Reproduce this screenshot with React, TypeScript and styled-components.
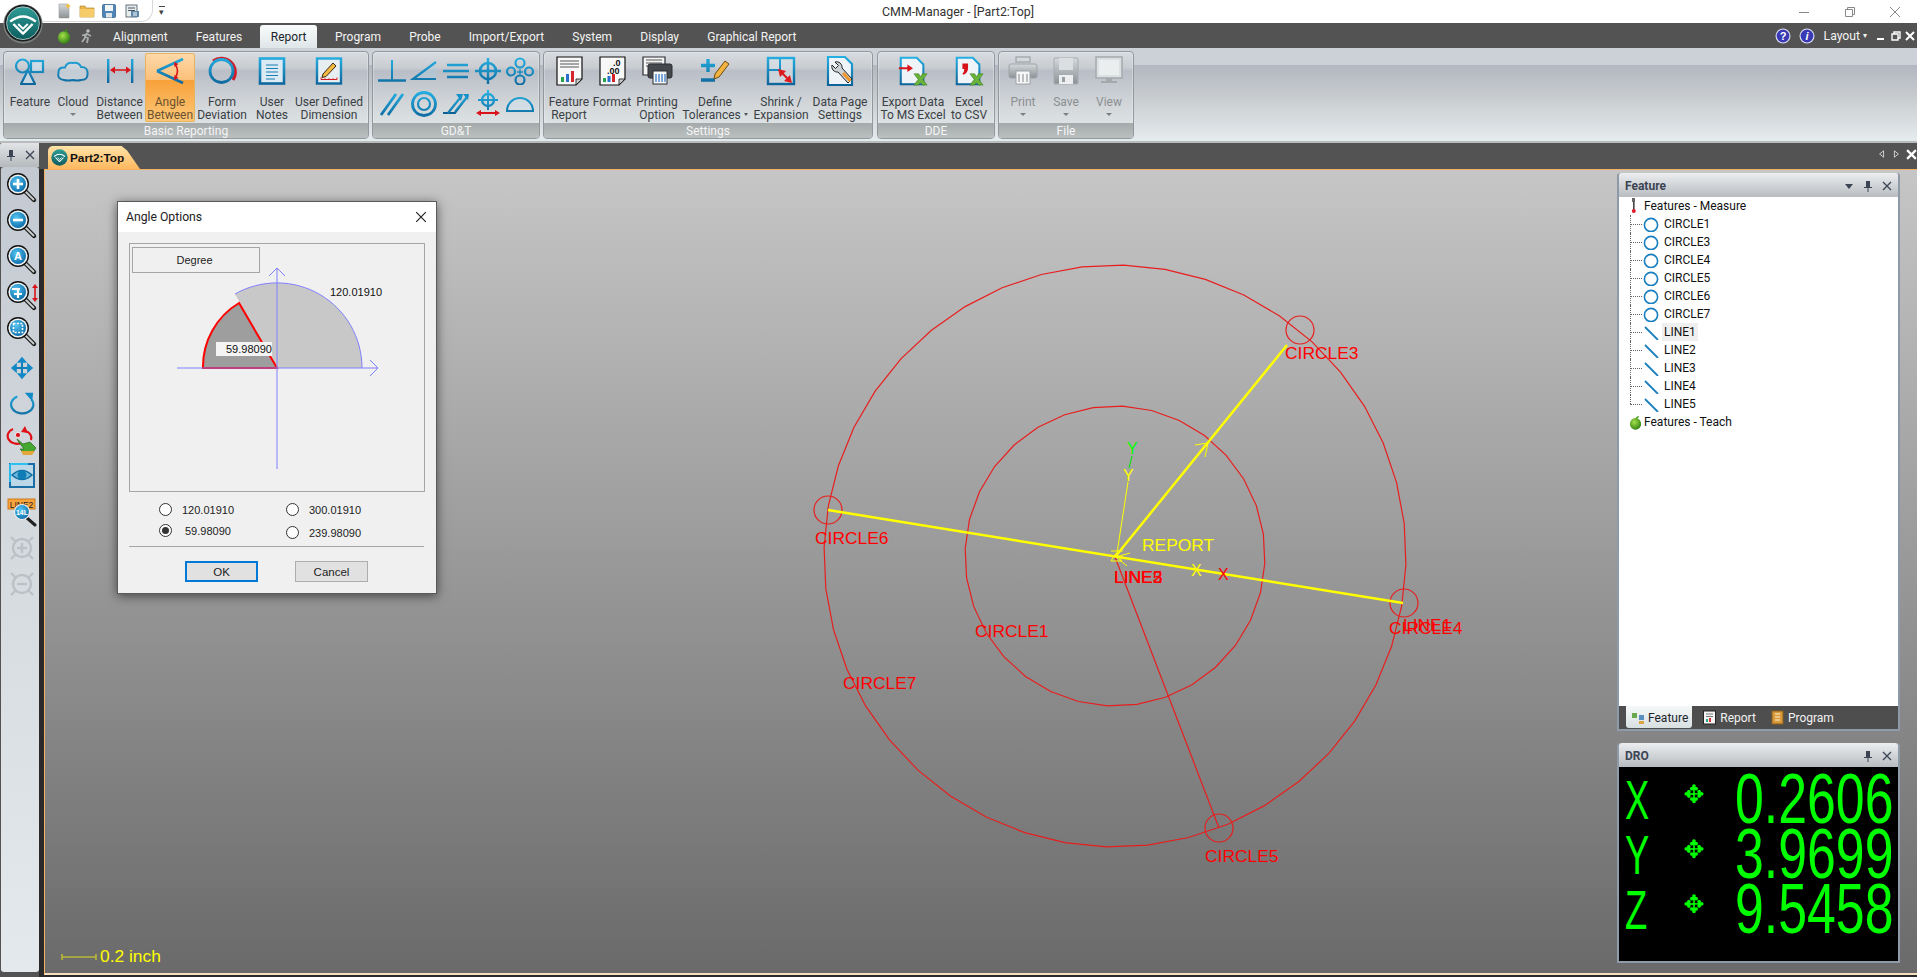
import React from "react";
import styled, { createGlobalStyle } from "styled-components";

const UI = `Roboto, "Liberation Sans", Arial, sans-serif`;
const TAHOMA = `"Liberation Sans", Arial, sans-serif`;

const Global = createGlobalStyle`
  html, body { margin: 0; height: 100%; overflow: hidden; background: #535353; }
  #root { height: 100%; }
`;

const Win = styled.div`
  width: 1917px; height: 977px; display: flex; flex-direction: column; position: relative;
  font: 12px ${UI}; color: #222; background: #535353; overflow: hidden;
`;
const TitleBar = styled.div`
  height: 23px; background: #fff; display: flex; align-items: center; flex: none;
`;
const QuickAccess = styled.div`
  margin-left: 43px; width: 110px; height: 22px; box-sizing: border-box; align-self: flex-start;
  border: 1px solid #d8d8d8; border-top: none; border-left: none; border-radius: 0 0 12px 0;
  display: flex; align-items: center; gap: 6.5px; padding-left: 13px; flex: none;
`;
const QuickMore = styled.span`
  margin-left: 6px; width: 6px; color: #444; font-size: 9px; line-height: 9px; border-top: 1px solid #444; padding-top: 1px; flex: none;
`;
const AppTitle = styled.div`
  margin-left: 717px; font: 12.4px ${UI}; color: #333; white-space: nowrap;
`;
const WinControls = styled.div`
  margin-left: auto; display: flex; align-items: center; gap: 33.5px; padding-right: 16px;
`;
const LogoSlot = styled.div`
  position: absolute; left: 3px; top: 4px; width: 40px; height: 40px; z-index: 5;
`;

const TabBar = styled.div`
  height: 25px; flex: none; background: #535353; display: flex; align-items: flex-end; padding-left: 56px;
`;
const TabIconSlot = styled.div<{ $gap: number }>`
  width: 16px; height: 18px; margin: 0 ${(p) => p.$gap}px 3px 0; display: flex; align-items: center; justify-content: center; flex: none;
`;
const Tab = styled.div<{ $active?: boolean }>`
  height: 23px; line-height: 24px; white-space: nowrap; font-size: 12px;
  padding: 0 ${(p) => (p.$active ? 11 : 14.1)}px;
  margin: 0 ${(p) => (p.$active ? 3.5 : 0)}px;
  color: ${(p) => (p.$active ? "#20252c" : "#f4f4f4")};
  border-radius: 3px 3px 0 0;
  background: ${(p) => (p.$active ? "linear-gradient(#fafcfc,#dfe6e8)" : "transparent")};
`;
const TabRight = styled.div`
  margin-left: auto; align-self: center; display: flex; align-items: center; color: #f2f2f2; font-size: 12.2px;
`;
const HelpSlot = styled.div`margin-right: 8px; display: flex;`;
const LayoutLabel = styled.span`margin-left: 1px; margin-right: 3px;`;
const Caret = styled.span`font-size: 8px; margin-right: 8px;`;

const Ribbon = styled.div`
  height: 95px; flex: none; box-sizing: border-box; padding: 3px 0 0 3px; display: flex;
  border-bottom: 2px solid #b9bbbc;
  background: linear-gradient(#ccd1d7 0, #ccd1d7 18%, #b2b7c1 18%, #c6cacd 50%, #e5ecee 100%);
`;
const Panel = styled.div<{ $w: number; $gap: number }>`
  width: ${(p) => p.$w}px; height: 88px; box-sizing: border-box; border: 1px solid #93989e; border-radius: 4px;
  display: flex; flex-direction: column; overflow: hidden; flex: none; margin-right: ${(p) => p.$gap}px;
  box-shadow: inset 0 0 0 1px rgba(255,255,255,.25);
  background: linear-gradient(#d8dbdf 0, #c9cdd2 18%, #b9bec7 22%, #d2d6d9 60%, #e4eaec 100%);
`;
const PanelBody = styled.div<{ $pad: number }>`
  height: 71px; flex: none; display: flex; padding-left: ${(p) => p.$pad}px;
`;
const PanelCaption = styled.div`
  height: 16px; line-height: 17px; flex: none; text-align: center; color: #f5f5f5; font-size: 12px;
  background: linear-gradient(#a4a9aa, #bcc1c2);
`;
const RibbonBtn = styled.div<{ $w: number; $active?: boolean; $off?: boolean }>`
  width: ${(p) => p.$w}px; flex: none; height: 69px; margin-top: 1px; display: flex; flex-direction: column; align-items: center;
  box-sizing: border-box;
  color: ${(p) => (p.$off ? "#8b8f92" : p.$active ? "#6b5130" : "#3a3f45")};
  outline: ${(p) => (p.$active ? "1px solid #e6b45f" : "none")};
  outline-offset: -1px;
  border-radius: 2px;
  background: ${(p) => (p.$active ? "linear-gradient(#fdd9aa 0,#fbc07a 39%,#f8a13a 39%,#fdc878 100%)" : "transparent")};
`;
const BtnIcon = styled.div`
  height: 36px; flex: none; display: flex; align-items: center; justify-content: center;
`;
const BtnLabel = styled.div`
  text-align: center; line-height: 13px; font-size: 12px; white-space: nowrap; padding-top: 7px;
`;
const TinyCaret = styled.div`
  width: 0; height: 0; border: 3px solid transparent; border-top: 3px solid #7c8084; margin: 4px auto 0;
`;
const InlineCaret = styled.span`
  display: inline-block; width: 0; height: 0; border: 2.5px solid transparent; border-top: 3px solid #555; margin-left: 3px; vertical-align: 1px;
`;
const GdtGrid = styled.div`
  display: grid; grid-template-columns: repeat(5, 32px); grid-template-rows: 33px 33px; padding: 2px 0 0 3px;
  justify-items: center; align-items: center;
`;

const Below = styled.div`flex: 1; display: flex; min-height: 0;`;
const LeftDock = styled.div`
  width: 39px; flex: none; display: flex; flex-direction: column; background: #535353;
`;
const LeftHead = styled.div`
  height: 24px; flex: none; display: flex; align-items: center; justify-content: center; gap: 8px;
  background: linear-gradient(#e2e4e6, #b6babd); border-radius: 2px 0 0 0;
`;
const LeftBody = styled.div`
  flex: 1; margin: 0 0 5px 1px; display: flex; flex-direction: column; align-items: center;
  border-radius: 3px; padding-top: 2.5px;
  background: linear-gradient(#c3c9d1 0, #d3d8dd 40%, #e3e9ec 100%);
`;
const ToolSlot = styled.div`
  width: 38px; height: 36px; box-sizing: border-box; padding-left: 4px; flex: none; display: flex; align-items: center; justify-content: center;
`;
const RightCol = styled.div`
  flex: 1; display: flex; flex-direction: column; min-width: 0; background: #2a2a2a;
`;
const DocStrip = styled.div`
  height: 26px; flex: none; display: flex; align-items: flex-end; background: #535353; padding-left: 9px;
`;
const DocTab = styled.div`
  width: 92px; height: 23px; box-sizing: border-box; display: flex; align-items: center; gap: 2px; padding-left: 3px;
  font: bold 11.8px ${TAHOMA}; color: #111; border-radius: 5px 0 0 0;
  background: linear-gradient(#ffe3a8, #ffb85e);
  clip-path: polygon(0 0, 80% 0, 86% 20%, 100% 100%, 0 100%);
`;
const DocNav = styled.div`
  margin-left: auto; align-self: center; display: flex; align-items: center; gap: 6px; margin-top: -4px;
`;
const Workspace = styled.div`
  flex: 1; margin: 0 0 2px 5px; display: flex; position: relative; min-height: 0; box-sizing: border-box;
  border: 1px solid #f2b163; border-bottom: 2px solid #f7e0bf; border-right: none;
  background: linear-gradient(#c6c6c6, #6a6a6a);
`;
const Viewport = styled.svg`display: block; flex: none;`;
const DockColumn = styled.div`
  width: 283px; flex: none; padding-top: 3px; display: flex; flex-direction: column; gap: 12px;
`;
const DockPanel = styled.div<{ $h: number }>`
  width: 283px; height: ${(p) => p.$h}px; box-sizing: border-box; border: 2px solid #8f9aa8; border-top: none;
  border-radius: 3px 3px 0 0; display: flex; flex-direction: column;
`;
const DockHead = styled.div`
  height: 23px; padding: 1px 6px 0; flex: none; display: flex; align-items: center; border-radius: 3px 3px 0 0;
  background: linear-gradient(#eceef0, #b8bcc0); font: bold 12px ${UI}; color: #3c4454;
`;
const DockActions = styled.div`margin-left: auto; display: flex; align-items: center; gap: 8px;`;
const TreeBody = styled.div`
  flex: 1; background: #fff; font: 12px ${UI}; color: #111; min-height: 0;
`;
const RootRow = styled.div`
  height: 18px; display: flex; align-items: center; padding-left: 7px;
`;
const RootIcon = styled.div`width: 18px; height: 18px; display: flex; align-items: center; justify-content: center;`;
const TreeGroup = styled.div`padding-left: 11px;`;
const TreeRow = styled.div<{ $last?: boolean }>`
  height: 18px; display: flex; align-items: center; position: relative; padding-left: 13px;
  &::before { content: ""; position: absolute; left: 0; top: 0; height: ${(p) => (p.$last ? "50%" : "100%")}; border-left: 1px dotted #666; }
  &::after { content: ""; position: absolute; left: 0; top: 50%; width: 12px; border-top: 1px dotted #666; }
`;
const TreeIcon = styled.div`width: 16px; height: 18px; margin-right: 5px; display: flex; align-items: center; justify-content: center;`;
const TreeText = styled.span<{ $hl?: boolean }>`
  padding: 2px; margin-left: -2px; background: ${(p) => (p.$hl ? "#efefef" : "transparent")};
`;
const DockTabs = styled.div`
  height: 23px; flex: none; background: #4e4e4e; display: flex; align-items: flex-start; padding-left: 7px; gap: 5px;
`;
const DockTab = styled.div<{ $active?: boolean }>`
  height: 21px; display: flex; align-items: center; gap: 3px; padding: 1px 4px 0 5px;
  font-size: 12px; color: ${(p) => (p.$active ? "#20252c" : "#f2f2f2")};
  background: ${(p) => (p.$active ? "linear-gradient(#f5f8f8,#d9e0e2)" : "transparent")};
  border-radius: 0 0 3px 3px;
`;
const DroBody = styled.div`
  flex: 1; background: #000; color: #00ff00; padding-top: 5px; display: flex; flex-direction: column;
`;
const DroRow = styled.div`
  height: 55px; flex: none; display: flex; align-items: center;
`;
const DroAxis = styled.span`
  width: 26px; margin-left: 6px; font: 56px/55px "Liberation Sans", Arial, sans-serif; flex: none; white-space: nowrap;
  display: inline-block; transform: scaleX(.65); transform-origin: 0 50%;
`;
const DroSign = styled.span`
  margin: 0 0 10px 30px; width: 26px; text-align: center; font: 25px/30px "DejaVu Sans", sans-serif; flex: none;
`;
const DroValue = styled.div`
  margin-left: auto; margin-right: 5px; width: 158px; flex: none; white-space: nowrap;
  font: 70px/55px "Liberation Sans", Arial, sans-serif; transform: scaleX(.74); transform-origin: 0 50%;
`;

const Dialog = styled.div`
  position: absolute; left: 72px; top: 31px; width: 320px; height: 393px; box-sizing: border-box; z-index: 3;
  background: #f0f0f0; border: 1px solid #5a5a5a; box-shadow: 0 2px 10px rgba(0,0,0,.55);
  display: flex; flex-direction: column; font: 11px ${TAHOMA}; color: #222;
`;
const DlgTitle = styled.div`
  height: 30px; flex: none; background: #fff; display: flex; align-items: center; padding: 0 9px 0 8px; font: 12.2px ${UI}; color: #222;
`;
const DlgClose = styled.div`margin-left: auto; display: flex;`;
const DlgBody = styled.div`padding: 11px 12px 0 11px; display: flex; flex-direction: column; flex: 1;`;
const DlgFrame = styled.div`
  width: 296px; height: 249px; box-sizing: border-box; border: 1px solid #a5a5a5; position: relative;
`;
const DegreeBtn = styled.div`
  position: absolute; left: 2px; top: 3px; width: 128px; height: 26px; box-sizing: border-box; padding-right: 3px;
  border: 1px solid #a5a5a5; background: #f0f0f0; display: flex; align-items: center; justify-content: center;
`;
const RadioGrid = styled.div`
  display: grid; grid-template-columns: 127px 127px; padding: 7px 0 0 30px;
`;
const RadioItem = styled.div<{ $nudge?: number; $top?: number }>`
  height: 21px; display: flex; align-items: center; gap: ${(p) => 10 + (p.$nudge ?? 0)}px;
  margin-top: ${(p) => p.$top ?? 0}px;
`;
const RadioDot = styled.span<{ $on?: boolean }>`
  width: 13px; height: 13px; box-sizing: border-box; border-radius: 50%; border: 1px solid #333; background: #fff; flex: none;
  display: flex; align-items: center; justify-content: center;
  &::after { content: ""; width: 7px; height: 7px; border-radius: 50%; background: ${(p) => (p.$on ? "#333" : "transparent")}; }
`;
const DlgRule = styled.div`height: 1px; background: #a5a5a5; width: 295px; margin-top: 3px;`;
const DlgButtons = styled.div`
  display: flex; gap: 37px; padding: 14px 0 0 56px;
`;
const DlgBtn = styled.div<{ $def?: boolean }>`
  width: 73px; height: 21px; box-sizing: border-box; display: flex; align-items: center; justify-content: center; font-size: 11.5px;
  background: #e1e1e1; border: ${(p) => (p.$def ? "2px solid #0078d7" : "1px solid #adadad")};
`;

/* ---------- icon helpers ---------- */
const Svg = ({ s = 32, vb, children }: { s?: number; vb?: string; children: React.ReactNode }) => (
  <svg width={s} height={s} viewBox={vb ?? "0 0 32 32"} fill="none">{children}</svg>
);
const BL = "url(#blueG)";
const Defs = () => (
  <svg width="0" height="0" style={{ display: "block" }}>
    <defs>
      <linearGradient id="blueG" gradientUnits="userSpaceOnUse" x1="0" y1="0" x2="0" y2="32">
        <stop offset="0" stopColor="#27b3e6" /><stop offset="1" stopColor="#0b5f94" />
      </linearGradient>
      <radialGradient id="lens" cx=".4" cy=".35" r=".7">
        <stop offset="0" stopColor="#56c6f2" /><stop offset="1" stopColor="#0a6aa8" />
      </radialGradient>
      <radialGradient id="apple" cx=".4" cy=".35" r=".7">
        <stop offset="0" stopColor="#a4e04a" /><stop offset="1" stopColor="#2c7d10" />
      </radialGradient>
      <linearGradient id="orb" x1="0" y1="0" x2="0" y2="1">
        <stop offset="0" stopColor="#2f9c96" /><stop offset="1" stopColor="#0d5d5e" />
      </linearGradient>
      <linearGradient id="grayG" x1="0" y1="0" x2="0" y2="1">
        <stop offset="0" stopColor="#d5d9dc" /><stop offset="1" stopColor="#8b9195" />
      </linearGradient>
    </defs>
  </svg>
);
const Chevrons = ({ c = "#fff" }: { c?: string }) => (
  <g stroke={c} strokeWidth="3" fill="none" strokeLinejoin="round">
    <path d="M9 22 Q25 9 41 22" />
    <path d="M13 25 L25 37 L37 25" />
    <path d="M19 25 L25 31 L31 25" strokeWidth="2.4" />
  </g>
);
const Logo = () => (
  <svg width="40" height="40" viewBox="0 0 50 50">
    <circle cx="25" cy="25" r="24.5" fill="#7b7f80" />
    <circle cx="25" cy="24" r="23" fill="#1a1f20" />
    <circle cx="25" cy="24" r="20.5" fill="url(#orb)" stroke="#c8d4d4" strokeWidth="1" />
    <Chevrons />
  </svg>
);
const MiniLogo = () => (
  <svg width="17" height="17" viewBox="0 0 50 50">
    <circle cx="25" cy="25" r="24" fill="url(#orb)" />
    <Chevrons />
  </svg>
);
const AppleIcon = ({ s = 16 }: { s?: number }) => (
  <svg width={s} height={s} viewBox="0 0 16 16">
    <ellipse cx="8" cy="9.5" rx="6" ry="6.2" fill="url(#apple)" />
    <path d="M8 4 Q9 1 12 1.5 Q11 4 8 4Z" fill="#3c9b12" />
  </svg>
);
const Runner = () => (
  <Svg s={16} vb="0 0 16 16">
    <circle cx="9" cy="3" r="1.8" fill="#b8bcbc" />
    <path d="M8 5 L6 9 L9 10 L8 15 M8 6 L12 8 M6.5 6.5 L3 7.5 M6 10 L3 14" stroke="#a9adad" strokeWidth="1.8" />
  </Svg>
);
const QNew = () => (
  <Svg s={16} vb="0 0 16 16">
    <path d="M3 1h8l2 2v12H3z" fill="url(#grayG)" stroke="#9a9a9a" strokeWidth=".6" />
    <path d="M12 0l1 2 2 1-2 1-1 2-1-2-2-1 2-1z" fill="#f2c040" />
  </Svg>
);
const QOpen = () => (
  <Svg s={16} vb="0 0 16 16">
    <path d="M1 3h5l1 2h8v9H1z" fill="#e9b64c" stroke="#b98a2a" strokeWidth=".7" />
    <path d="M1 6h14v8H1z" fill="#f6cc6a" />
  </Svg>
);
const QSave = () => (
  <Svg s={16} vb="0 0 16 16">
    <rect x="1.5" y="1.5" width="13" height="13" rx="1" fill="#4f86b8" stroke="#2c5a87" strokeWidth=".7" />
    <rect x="4" y="2" width="8" height="6" fill="#f1f4f7" />
    <rect x="5" y="10" width="6" height="4.5" fill="#dfe4e8" />
  </Svg>
);
const QReport = () => (
  <Svg s={16} vb="0 0 16 16">
    <rect x="2" y="2" width="11" height="12" fill="#e7ecef" stroke="#48545f" strokeWidth=".8" />
    <path d="M4 5h7M4 7.5h7" stroke="#48545f" />
    <rect x="7" y="8" width="8" height="6" fill="#5f87a8" />
    <path d="M9 10h4M9 12h4" stroke="#fff" />
  </Svg>
);

const Feature = () => (
  <Svg s={32}>
    <circle cx="8.5" cy="11" r="6.5" stroke={BL} strokeWidth="2.2" />
    <rect x="17" y="6" width="12" height="11" fill="#cfe6f2" fillOpacity=".55" stroke={BL} strokeWidth="2.2" />
    <path d="M14 15 L21 29 H7 Z" fill="#cfe6f2" fillOpacity=".55" stroke={BL} strokeWidth="2.2" strokeLinejoin="round" />
  </Svg>
);
const Cloud = () => (
  <Svg s={32}>
    <path d="M7 25 Q0 24 1.5 18 Q1 12 8 12.5 Q10 7 16 8 Q22 7 24 12 Q31 12 30.5 18.5 Q31 25 24 25 Q20 26 16 25 Q11 26 7 25 Z" fill="#d5e4ee" fillOpacity=".35" stroke={BL} strokeWidth="2" />
  </Svg>
);
const Distance = () => (
  <Svg s={32}>
    <rect x="3" y="4" width="2.4" height="24" fill={BL} />
    <rect x="27" y="4" width="2.4" height="24" fill={BL} />
    <path d="M7 15H26" stroke="#d8141a" strokeWidth="1.6" />
    <path d="M6 15l5-3.4v6.8zM27 15l-5-3.4v6.8z" fill="#d8141a" />
  </Svg>
);
const AngleI = () => (
  <Svg s={32}>
    <path d="M3 16 L29 4 M3 16 L29 28" stroke={BL} strokeWidth="2.8" />
    <path d="M21 9 Q26 16 21 23" stroke="#d8141a" strokeWidth="1.6" />
    <path d="M20 7l4.5 2-4 3zM20 25l4.5-2-4-3z" fill="#d8141a" />
  </Svg>
);
const Form = () => (
  <Svg s={32}>
    <path d="M7 6 A14 14 0 0 1 27 25" stroke="#d31a28" strokeWidth="3" />
    <circle cx="15.5" cy="16" r="11.5" stroke={BL} strokeWidth="2.8" />
  </Svg>
);
const Notes = () => (
  <Svg s={32}>
    <rect x="4" y="3.5" width="24" height="25" fill="#dbeaf3" stroke={BL} strokeWidth="2.6" />
    <path d="M10 10h12M10 13.5h12M10 17h12M10 20.5h12M10 24h9" stroke="#1a7fb7" strokeWidth="1.1" />
  </Svg>
);
const UserDim = () => (
  <Svg s={32}>
    <rect x="4" y="3.5" width="24" height="25" fill="#e6eef2" stroke={BL} strokeWidth="2.4" />
    <path d="M10 19 L20 8 L23 11 L13 21.5 L9 22.5 Z" fill="#f4b942" stroke="#3a2a10" strokeWidth="1" />
    <path d="M8 24.5h16M8 22.5v2M12 23.3v1.2M16 23.3v1.2M20 23.3v1.2M24 22.5v2" stroke="#d41a20" strokeWidth="1" />
  </Svg>
);
const Perp = () => (
  <Svg s={28} vb="0 0 28 28"><path d="M14 3V23" stroke={BL} strokeWidth="2" /><path d="M0 23.5H28" stroke={BL} strokeWidth="2.4" /></Svg>
);
const AngGdt = () => (
  <Svg s={28} vb="0 0 28 28"><path d="M26 5 L3 22 H26" stroke={BL} strokeWidth="2.2" fill="#9dd3ea" fillOpacity=".25" /></Svg>
);
const Flat = () => (
  <Svg s={28} vb="0 0 28 28"><path d="M5 8H26M1 14H27M5 20H26" stroke={BL} strokeWidth="2.4" /></Svg>
);
const Target = () => (
  <Svg s={28} vb="0 0 28 28"><circle cx="14" cy="14" r="8" stroke={BL} strokeWidth="2.6" /><path d="M14 1V27M1 14H27" stroke={BL} strokeWidth="2.4" /></Svg>
);
const Pattern = () => (
  <Svg s={28} vb="0 0 28 28">
    <circle cx="14" cy="6" r="4.5" stroke={BL} strokeWidth="2.2" /><circle cx="14" cy="23" r="4.5" stroke={BL} strokeWidth="2.2" />
    <circle cx="5" cy="14.5" r="4" stroke={BL} strokeWidth="2.2" /><circle cx="23" cy="14.5" r="4" stroke={BL} strokeWidth="2.2" />
    <path d="M14 12V18M11 15H17" stroke={BL} strokeWidth="1.4" />
  </Svg>
);
const Para = () => (
  <Svg s={28} vb="0 0 28 28"><path d="M3 25 L18 4 M10 25 L25 4" stroke={BL} strokeWidth="2.8" /></Svg>
);
const Conc = () => (
  <Svg s={28} vb="0 0 28 28"><circle cx="14" cy="14" r="11.5" stroke={BL} strokeWidth="2.8" /><circle cx="14" cy="14" r="6" stroke={BL} strokeWidth="2.2" /></Svg>
);
const Runout = () => (
  <Svg s={28} vb="0 0 28 28">
    <path d="M1 23H13L25 7" stroke="#0b5f94" strokeWidth="1.8" />
    <path d="M6 23 L18 8 M13 22 L25 7" stroke={BL} strokeWidth="2.2" />
    <path d="M14 4l7 0-2 7zM21 4l6 0-1 6z" fill="#1690c8" />
  </Svg>
);
const TargetW = () => (
  <Svg s={28} vb="0 0 28 28">
    <circle cx="14" cy="10" r="6" stroke={BL} strokeWidth="2.4" /><path d="M14 0V20M4 10H24" stroke={BL} strokeWidth="2" />
    <path d="M4 23H24" stroke="#d8141a" strokeWidth="2" /><path d="M2 23l5-3v6zM26 23l-5-3v6z" fill="#d8141a" />
  </Svg>
);
const Semi = () => (
  <Svg s={28} vb="0 0 28 28"><path d="M1 21 A13 13 0 0 1 27 21 Z" stroke={BL} strokeWidth="2.2" fill="#cfe7f2" fillOpacity=".4" /></Svg>
);
const Doc = ({ b = "#111", children }: { b?: string; children?: React.ReactNode }) => (
  <>
    <path d="M4 2H29V24L23 30H4Z" fill="#f8f8f8" stroke={b} strokeWidth="1.2" />
    <path d="M29 24H23V30Z" fill="#c9c9c9" stroke={b} strokeWidth=".8" />
    {children}
  </>
);
const Bars = () => (
  <g>
    <rect x="8" y="22" width="3" height="5" fill="#24a34a" /><rect x="13" y="19" width="3" height="8" fill="#2a6fd0" /><rect x="18" y="16" width="3" height="11" fill="#d6242a" />
  </g>
);
const FeatRep = () => (
  <Svg s={32}><Doc><path d="M7 6H26M7 9H26M7 12H26" stroke="#555" /><Bars /></Doc></Svg>
);
const Format = () => (
  <Svg s={32}>
    <Doc>
      <text x="17" y="11" fontFamily={TAHOMA} fontWeight="700" fontSize="9" fill="#111">.0</text>
      <text x="11" y="19" fontFamily={TAHOMA} fontWeight="700" fontSize="9" fill="#111">.00</text>
      <rect x="7" y="23" width="3" height="4" fill="#24a34a" /><rect x="11.5" y="21" width="3" height="6" fill="#2a6fd0" /><rect x="16" y="19" width="3" height="8" fill="#d6242a" />
    </Doc>
  </Svg>
);
const Printer = ({ gray }: { gray?: boolean }) => {
  const d = gray ? "#9ca3a8" : "#2a2d30";
  return (
    <Svg s={32}>
      {gray ? (
        <rect x="9" y="2" width="14" height="5" fill="#d5d9dc" stroke={d} strokeWidth="1.2" />
      ) : (
        <>
          <path d="M2 2H24V20H2Z" fill="#f4f4f4" stroke={d} strokeWidth="1.2" />
          <path d="M5 5H21M5 8H21M5 11H14" stroke="#555" />
        </>
      )}
      <rect x={gray ? 2 : 7} y="9" width={gray ? 28 : 24} height="14" rx="2" fill={gray ? "url(#grayG)" : "#45494d"} stroke={d} />
      <rect x={gray ? 9 : 12} y="16" width={14} height="13" fill="#f7f7f7" stroke={d} />
      <path d={gray ? "M12 19V27M16 19V27M20 19V27" : "M15 19V27M18 19V27M21 19V27M24 19V27"} stroke={gray ? "#9aa0a4" : "#3a7ec8"} strokeWidth="1.3" />
    </Svg>
  );
};
const DefineTol = () => (
  <Svg s={32}>
    <path d="M9 4V17M2 10.5H16" stroke={BL} strokeWidth="3.4" />
    <path d="M2 25H16" stroke={BL} strokeWidth="3.4" />
    <path d="M16 19 L26 6 L30 9 L20 22 L15 24Z" fill="#f2b23e" stroke="#6e4a12" strokeWidth="1" />
  </Svg>
);
const Shrink = () => (
  <Svg s={32}>
    <rect x="3" y="3" width="26" height="26" fill="#dbe8ee" fillOpacity=".5" stroke={BL} strokeWidth="2.4" />
    <path d="M3 15H15V3" stroke={BL} strokeWidth="2" />
    <path d="M16 17 L24 25" stroke="#dd1c20" strokeWidth="2.2" /><path d="M27 28l-2-8-6 6zM13 14l8 2-6 6z" fill="#dd1c20" />
  </Svg>
);
const BlueDoc = () => (
  <path d="M4 2H21L28 9V30H4Z" fill="#eef4f8" stroke={BL} strokeWidth="2.2" />
);
const DataPage = () => (
  <Svg s={32}>
    <BlueDoc />
    <path d="M8 10 a5.5 5.5 0 0 0 6 7 L24 28 L28 24 L18 13 a5.5 5.5 0 0 0 -7-6 l3.5 3.5 -3 3z" fill="#cfd3d6" stroke="#222" strokeWidth="1" />
    <path d="M19 18 L26.5 26" stroke="#f0962a" strokeWidth="3" />
  </Svg>
);
const XlMark = () => (
  <path d="M18 19h5l2 3 2-3h5l-4.5 6 4.5 6h-5l-2-3-2 3h-5l4.5-6z" fill="#69b33a" stroke="#3e7d1c" strokeWidth=".6" />
);
const Export = () => (
  <Svg s={32} vb="0 0 34 32">
    <BlueDoc />
    <path d="M2 13H13" stroke="#d8141a" strokeWidth="2.2" /><path d="M17 13l-6-4v8z" fill="#d8141a" />
    <XlMark />
  </Svg>
);
const ToCsv = () => (
  <Svg s={32} vb="0 0 34 32">
    <BlueDoc />
    <path d="M10 8h6v5q0 5-5 7l-1-1q2-2 2-5h-2z" fill="#d8141a" />
    <XlMark />
  </Svg>
);
const SaveG = () => (
  <Svg s={32}>
    <rect x="4" y="3" width="24" height="26" rx="1" fill="url(#grayG)" stroke="#a7acaf" />
    <rect x="9" y="3" width="14" height="12" fill="#dcdfe1" /><rect x="9" y="20" width="14" height="9" fill="#eceef0" /><rect x="12" y="22" width="3" height="5" fill="#9a9fa2" />
  </Svg>
);
const ViewG = () => (
  <Svg s={32}>
    <rect x="3" y="2" width="26" height="21" fill="#dde0e2" stroke="#a7acaf" strokeWidth="1.6" />
    <rect x="6" y="5" width="20" height="15" fill="#ebeeef" />
    <path d="M13 23h6v3h5v2H8v-2h5z" fill="#a4a9ac" />
  </Svg>
);

const Mag = ({ children, extra }: { children?: React.ReactNode; extra?: React.ReactNode }) => (
  <Svg s={32}>
    <path d="M19 19 L28 28" stroke="#1a1a1a" strokeWidth="4.4" strokeLinecap="round" />
    <path d="M20 20 L27.5 27.5" stroke="#c9cdd0" strokeWidth="2" strokeLinecap="round" />
    <circle cx="12" cy="12" r="11" fill="#111" />
    <circle cx="12" cy="12" r="9.6" fill="#f2f5f6" />
    <circle cx="12" cy="12" r="8" fill="url(#lens)" />
    {children}
    {extra}
  </Svg>
);
const Glow = ({ d, w = 2.6 }: { d: string; w?: number }) => <path d={d} stroke="#fff" strokeWidth={w} />;
const Tools = [
  <Mag key="a"><Glow d="M7 12H17M12 7V17" /></Mag>,
  <Mag key="b"><Glow d="M7 12H17" /></Mag>,
  <Mag key="c"><text x="12" y="16" textAnchor="middle" fontFamily={TAHOMA} fontWeight="700" fontSize="11" fill="#fff">A</text></Mag>,
  <Mag key="d" extra={<><path d="M29 7V19" stroke="#d8141a" strokeWidth="1.6" /><path d="M29 4l-3 4h6zM29 22l-3-4h6z" fill="#d8141a" /></>}>
    <Glow d="M6 9H14M8 14H16M12 10V18" w={2.2} />
  </Mag>,
  <Mag key="e"><rect x="7.5" y="7.5" width="9" height="9" stroke="#fff" strokeWidth="1.6" strokeDasharray="2 1.4" /></Mag>,
  <Svg key="f" s={24} vb="0 0 28 28">
    <path d="M14 5V23M5 14H23" stroke="#1080bc" strokeWidth="2.4" />
    <path d="M14 1l6 7H8zM14 27l6-7H8zM1 14l7-6v12zM27 14l-7-6v12z" fill="#1389c6" />
  </Svg>,
  <Svg key="g" s={26} vb="0 0 28 28">
    <path d="M9 6 A12 9.5 0 1 0 24 9" stroke={BL} strokeWidth="2.4" />
    <path d="M17 2l9 0-1 9z" fill="#1389c6" />
  </Svg>,
  <Svg key="h" s={32}>
    <path d="M7 5 A9 7.5 0 1 0 15 19" stroke="#e01218" strokeWidth="2.2" fill="none" />
    <path d="M19 7 A8 7 0 0 1 25 16" stroke="#e01218" strokeWidth="2.2" />
    <path d="M19 2l3 7-7-1z" fill="#e01218" />
    <circle cx="12" cy="11" r="2.6" fill="#d8141a" stroke="#fff" strokeWidth=".8" />
    <path d="M11 15l6 5 7-2 6 6-3 4H17l-3-3 4 0-6-8z" fill="#45a82e" stroke="#27641a" strokeWidth=".7" />
    <path d="M15 27h14l-3 4H17z" fill="#e2a63a" />
  </Svg>,
  <Svg key="i" s={28} vb="0 0 28 28">
    <rect x="2" y="2" width="24" height="23" fill="#bcd8e8" stroke="#1a6ea5" strokeWidth="2" />
    <path d="M2 2H20M2 2V20" stroke="#2bc0f0" strokeWidth="1.8" />
    <path d="M4 13 Q14 4 24 13 Q14 22 4 13Z" fill="#6db8da" stroke="#0e6fa5" strokeWidth="1.6" />
    <circle cx="14" cy="13" r="4.5" fill="#0f7cb5" />
  </Svg>,
  <Svg key="j" s={30} vb="0 0 30 30">
    <rect x="1" y="2" width="27" height="10" fill="#f8a33c" stroke="#c97a1a" />
    <text x="14.5" y="10.5" textAnchor="middle" fontFamily={TAHOMA} fontSize="8.5" fill="#222">LINE2</text>
    <path d="M20 21 L28 28" stroke="#222" strokeWidth="3" strokeLinecap="round" />
    <circle cx="15" cy="15" r="7.5" fill="url(#lens)" stroke="#eee" strokeWidth="1.2" />
    <text x="15" y="18" textAnchor="middle" fontFamily={TAHOMA} fontSize="7" fontWeight="700" fill="#fff">14L</text>
  </Svg>,
  <Svg key="k" s={26} vb="0 0 26 26">
    <circle cx="13" cy="13" r="9" stroke="#bcc1c6" strokeWidth="2.4" />
    <path d="M2 2l5 5M24 2l-5 5M2 24l5-5M24 24l-5-5" stroke="#bcc1c6" strokeWidth="2.4" />
    <path d="M8 13H18M13 8V18" stroke="#bcc1c6" strokeWidth="2.4" />
  </Svg>,
  <Svg key="l" s={26} vb="0 0 26 26">
    <circle cx="13" cy="13" r="9" stroke="#bcc1c6" strokeWidth="2.4" />
    <path d="M2 2l5 5M24 2l-5 5M2 24l5-5M24 24l-5-5" stroke="#bcc1c6" strokeWidth="2.4" />
    <path d="M8 13H18" stroke="#bcc1c6" strokeWidth="2.4" />
  </Svg>,
];

const Pin = ({ c = "#3c4454" }: { c?: string }) => (
  <Svg s={12} vb="0 0 12 12"><path d="M4 1H8V7H10V8H6.5V12H5.5V8H2V7H4Z" fill={c} /></Svg>
);
const XMark = ({ c = "#3c4454", s = 10, w = 1.3 }: { c?: string; s?: number; w?: number }) => (
  <Svg s={s} vb="0 0 10 10"><path d="M1 1L9 9M9 1L1 9" stroke={c} strokeWidth={w} /></Svg>
);
const Ring = () => (
  <Svg s={16} vb="0 0 16 16"><circle cx="8" cy="9" r="6.6" stroke="#1a7fbf" strokeWidth="1.6" /></Svg>
);
const LineI = () => (
  <Svg s={16} vb="0 0 16 16"><path d="M2 3L15 16" stroke="#1a7fbf" strokeWidth="1.8" /></Svg>
);
const Probe = () => (
  <Svg s={16} vb="0 0 16 16">
    <rect x="5" y="0" width="3" height="4" fill="#666" /><rect x="6" y="4" width="1.6" height="8" fill="#444" /><circle cx="6.8" cy="13" r="2" fill="#e01a2a" />
  </Svg>
);
const Help = ({ t }: { t: string }) => (
  <svg width="16" height="16" viewBox="0 0 16 16">
    <circle cx="8" cy="8" r="7.5" fill="#dfe3f6" />
    <circle cx="8" cy="8" r="6.4" fill="#3a3ab4" />
    <text x="8" y="12" textAnchor="middle" fontFamily={TAHOMA} fontWeight="700" fontStyle={t === "i" ? "italic" : "normal"} fontSize="11" fill="#fff">{t}</text>
  </svg>
);

const faceted = (cx: number, cy: number, r: number, n: number, rot = 0) =>
  Array.from({ length: n }, (_, i) => {
    const a = rot + (i * 2 * Math.PI) / n;
    return `${(cx + r * Math.cos(a)).toFixed(1)},${(cy + r * Math.sin(a)).toFixed(1)}`;
  }).join(" ");

const RED = "#ff0000";
const LN = "#e81e1e";
const YEL = "#ffff00";
const CanvasText = ({ x, y, c = RED, fs = 17.4, children }: { x: number; y: number; c?: string; fs?: number; children: React.ReactNode }) => (
  <text x={x} y={y} fill={c} fontFamily={TAHOMA} fontSize={fs}>{children}</text>
);

const Drawing = () => (
  <Viewport width={1572} height={803} viewBox="45 170 1572 803">
    <polygon points={faceted(1115, 556, 291, 44, 0.03)} fill="none" stroke={LN} strokeWidth="1.2" />
    <polygon points={faceted(1115, 556, 150, 32, 0.05)} fill="none" stroke={LN} strokeWidth="1.2" />
    <circle cx="1300" cy="330" r="14" fill="none" stroke={LN} strokeWidth="1.2" />
    <circle cx="1404" cy="603" r="14" fill="none" stroke={LN} strokeWidth="1.2" />
    <circle cx="1219" cy="828" r="14" fill="none" stroke={LN} strokeWidth="1.2" />
    <circle cx="828" cy="510" r="14" fill="none" stroke={LN} strokeWidth="1.2" />
    <path d="M1115 557 L1219 828" stroke={LN} strokeWidth="1.2" />
    <path d="M828 510 L1403 603" stroke={YEL} strokeWidth="2.5" />
    <path d="M1115 557 L1287 345" stroke={YEL} strokeWidth="2.5" />
    <path d="M1195 445 L1208 443 L1205 457" stroke={YEL} strokeWidth="1" fill="none" />
    <path d="M1130 553 L1116 557 L1127 566" stroke={YEL} strokeWidth="1" fill="none" />
    <path d="M1111 551 H1123 M1111 561 H1122 L1116 553 Z" stroke={YEL} strokeWidth="1" fill="none" />
    <path d="M1117 553 L1128 482" stroke={YEL} strokeWidth="1" />
    <path d="M1129 468 L1132 456" stroke="#16e016" strokeWidth="1.2" />
    <CanvasText x={1127} y={454} c="#00ff00" fs={16}>Y</CanvasText>
    <CanvasText x={1123} y={481} c={YEL} fs={16}>Y</CanvasText>
    <CanvasText x={1142} y={551} c={YEL}>REPORT</CanvasText>
    <CanvasText x={1191} y={576} c={YEL} fs={16}>X</CanvasText>
    <CanvasText x={1218} y={580} fs={16}>X</CanvasText>
    <CanvasText x={1114} y={583}>LINE5</CanvasText>
    <CanvasText x={1114} y={583}>LINE3</CanvasText>
    <CanvasText x={1114} y={583}>LINE2</CanvasText>
    <CanvasText x={1403} y={631}>LINE1</CanvasText>
    <CanvasText x={1389} y={634}>CIRCLE4</CanvasText>
    <CanvasText x={1285} y={359}>CIRCLE3</CanvasText>
    <CanvasText x={815} y={544}>CIRCLE6</CanvasText>
    <CanvasText x={843} y={689}>CIRCLE7</CanvasText>
    <CanvasText x={975} y={637}>CIRCLE1</CanvasText>
    <CanvasText x={1205} y={862}>CIRCLE5</CanvasText>
    <path d="M62 957 H96 M62 954 V960 M96 954 V960" stroke="#b8b83a" strokeWidth="1.6" />
    <CanvasText x={100} y={962} c={YEL}>0.2 inch</CanvasText>
  </Viewport>
);

const AngleDraw = () => (
  <svg width="294" height="247" viewBox="130 244 294 247" style={{ display: "block" }}>
    <path d="M277 368 H362 A85 85 0 0 0 235 294 Z" fill="#c8c8c8" />
    <path d="M362 368 A85 85 0 0 0 235 294" fill="none" stroke="#8080ff" strokeWidth="1" />
    <path d="M203 368 A74 74 0 0 1 239 303 L277 368 Z" fill="#9e9e9e" stroke="#ff0000" strokeWidth="2" />
    <path d="M177 368 H377 M277 269 V469" stroke="#8080ff" strokeWidth="1" />
    <path d="M370 360 L378 368 L370 376 M269 276 L277 268 L285 276" fill="none" stroke="#8080ff" strokeWidth="1" />
    <rect x="216" y="342" width="56" height="14" fill="#f4f4f4" />
    <text x="226" y="353" fontFamily={TAHOMA} fontSize="11" fill="#111">59.98090</text>
    <text x="330" y="296" fontFamily={TAHOMA} fontSize="11" fill="#111">120.01910</text>
  </svg>
);

const Dro = ({ axis, val }: { axis: string; val: string }) => (
  <DroRow>
    <DroAxis>{axis}</DroAxis>
    <DroSign>✥</DroSign>
    <DroValue>{val}</DroValue>
  </DroRow>
);

export default function App() {
  return (
    <Win>
      <Global />
      <Defs />
      <LogoSlot><Logo /></LogoSlot>
      <TitleBar>
        <QuickAccess>
          <QNew /><QOpen /><QSave /><QReport />
        </QuickAccess>
        <QuickMore>▾</QuickMore>
        <AppTitle>CMM-Manager - [Part2:Top]</AppTitle>
        <WinControls>
          <Svg s={12} vb="0 0 12 12"><path d="M1 6.5H11" stroke="#888" /></Svg>
          <Svg s={12} vb="0 0 12 12"><path d="M1.5 3.5H8.5V10.5H1.5ZM3.5 3.5V1.5H10.5V8.5H8.5" stroke="#888" /></Svg>
          <Svg s={12} vb="0 0 12 12"><path d="M1 1L11 11M11 1L1 11" stroke="#888" /></Svg>
        </WinControls>
      </TitleBar>
      <TabBar>
        <TabIconSlot $gap={7}><AppleIcon /></TabIconSlot>
        <TabIconSlot $gap={4}><Runner /></TabIconSlot>
        <Tab>Alignment</Tab>
        <Tab>Features</Tab>
        <Tab $active>Report</Tab>
        <Tab>Program</Tab>
        <Tab>Probe</Tab>
        <Tab>Import/Export</Tab>
        <Tab>System</Tab>
        <Tab>Display</Tab>
        <Tab>Graphical Report</Tab>
        <TabRight>
          <HelpSlot><Help t="?" /></HelpSlot>
          <HelpSlot><Help t="i" /></HelpSlot>
          <LayoutLabel>Layout</LayoutLabel>
          <Caret>▾</Caret>
          <Svg s={14} vb="0 0 14 14"><path d="M2 10H9" stroke="#fff" strokeWidth="2" /></Svg>
          <Svg s={14} vb="0 0 14 14"><path d="M3 5H9V11H3ZM5 5V3H11V9H9" stroke="#fff" strokeWidth="1.4" /></Svg>
          <Svg s={14} vb="0 0 14 14"><path d="M3 3L11 11M11 3L3 11" stroke="#fff" strokeWidth="2" /></Svg>
        </TabRight>
      </TabBar>
      <Ribbon>
        <Panel $w={366} $gap={3}>
          <PanelBody $pad={4}>
            <RibbonBtn $w={44}><BtnIcon><Feature /></BtnIcon><BtnLabel>Feature</BtnLabel></RibbonBtn>
            <RibbonBtn $w={42}><BtnIcon><Cloud /></BtnIcon><BtnLabel>Cloud<TinyCaret /></BtnLabel></RibbonBtn>
            <RibbonBtn $w={51}><BtnIcon><Distance /></BtnIcon><BtnLabel>Distance<br />Between</BtnLabel></RibbonBtn>
            <RibbonBtn $w={50} $active><BtnIcon><AngleI /></BtnIcon><BtnLabel>Angle<br />Between</BtnLabel></RibbonBtn>
            <RibbonBtn $w={54}><BtnIcon><Form /></BtnIcon><BtnLabel>Form<br />Deviation</BtnLabel></RibbonBtn>
            <RibbonBtn $w={46}><BtnIcon><Notes /></BtnIcon><BtnLabel>User<br />Notes</BtnLabel></RibbonBtn>
            <RibbonBtn $w={68}><BtnIcon><UserDim /></BtnIcon><BtnLabel>User Defined<br />Dimension</BtnLabel></RibbonBtn>
          </PanelBody>
          <PanelCaption>Basic Reporting</PanelCaption>
        </Panel>
        <Panel $w={168} $gap={3}>
          <PanelBody $pad={0}>
            <GdtGrid>
              <Perp /><AngGdt /><Flat /><Target /><Pattern />
              <Para /><Conc /><Runout /><TargetW /><Semi />
            </GdtGrid>
          </PanelBody>
          <PanelCaption>GD&amp;T</PanelCaption>
        </Panel>
        <Panel $w={330} $gap={4}>
          <PanelBody $pad={3}>
            <RibbonBtn $w={44}><BtnIcon><FeatRep /></BtnIcon><BtnLabel>Feature<br />Report</BtnLabel></RibbonBtn>
            <RibbonBtn $w={42}><BtnIcon><Format /></BtnIcon><BtnLabel>Format</BtnLabel></RibbonBtn>
            <RibbonBtn $w={48}><BtnIcon><Printer /></BtnIcon><BtnLabel>Printing<br />Option</BtnLabel></RibbonBtn>
            <RibbonBtn $w={68}><BtnIcon><DefineTol /></BtnIcon><BtnLabel>Define<br />Tolerances<InlineCaret /></BtnLabel></RibbonBtn>
            <RibbonBtn $w={64}><BtnIcon><Shrink /></BtnIcon><BtnLabel>Shrink /<br />Expansion</BtnLabel></RibbonBtn>
            <RibbonBtn $w={54}><BtnIcon><DataPage /></BtnIcon><BtnLabel>Data Page<br />Settings</BtnLabel></RibbonBtn>
          </PanelBody>
          <PanelCaption>Settings</PanelCaption>
        </Panel>
        <Panel $w={118} $gap={3}>
          <PanelBody $pad={0}>
            <RibbonBtn $w={70}><BtnIcon><Export /></BtnIcon><BtnLabel>Export Data<br />To MS Excel</BtnLabel></RibbonBtn>
            <RibbonBtn $w={42}><BtnIcon><ToCsv /></BtnIcon><BtnLabel>Excel<br />to CSV</BtnLabel></RibbonBtn>
          </PanelBody>
          <PanelCaption>DDE</PanelCaption>
        </Panel>
        <Panel $w={136} $gap={0}>
          <PanelBody $pad={0}>
            <RibbonBtn $w={48} $off><BtnIcon><Printer gray /></BtnIcon><BtnLabel>Print<TinyCaret /></BtnLabel></RibbonBtn>
            <RibbonBtn $w={38} $off><BtnIcon><SaveG /></BtnIcon><BtnLabel>Save<TinyCaret /></BtnLabel></RibbonBtn>
            <RibbonBtn $w={48} $off><BtnIcon><ViewG /></BtnIcon><BtnLabel>View<TinyCaret /></BtnLabel></RibbonBtn>
          </PanelBody>
          <PanelCaption>File</PanelCaption>
        </Panel>
      </Ribbon>
      <Below>
        <LeftDock>
          <LeftHead><Pin /><XMark /></LeftHead>
          <LeftBody>
            {Tools.map((t, i) => <ToolSlot key={i}>{t}</ToolSlot>)}
          </LeftBody>
        </LeftDock>
        <RightCol>
          <DocStrip>
            <DocTab><MiniLogo />Part2:Top</DocTab>
            <DocNav>
              <Svg s={8} vb="0 0 8 10"><path d="M6 1L1 5L6 9Z" fill="none" stroke="#eee" /></Svg>
              <Svg s={8} vb="0 0 8 10"><path d="M2 1L7 5L2 9Z" fill="none" stroke="#eee" /></Svg>
              <XMark c="#fff" s={11} w={2} />
            </DocNav>
          </DocStrip>
          <Workspace>
            <Drawing />
            <DockColumn>
              <DockPanel $h={558}>
                <DockHead>
                  Feature
                  <DockActions>
                    <Svg s={10} vb="0 0 10 10"><path d="M1 3H9L5 8Z" fill="#3c4454" /></Svg>
                    <Pin />
                    <XMark />
                  </DockActions>
                </DockHead>
                <TreeBody>
                  <RootRow><RootIcon><Probe /></RootIcon><span>Features - Measure</span></RootRow>
                  <TreeGroup>
                    {["CIRCLE1", "CIRCLE3", "CIRCLE4", "CIRCLE5", "CIRCLE6", "CIRCLE7"].map((n) => (
                      <TreeRow key={n}><TreeIcon><Ring /></TreeIcon><TreeText>{n}</TreeText></TreeRow>
                    ))}
                    {["LINE1", "LINE2", "LINE3", "LINE4", "LINE5"].map((n) => (
                      <TreeRow key={n} $last={n === "LINE5"}><TreeIcon><LineI /></TreeIcon><TreeText $hl={n === "LINE1"}>{n}</TreeText></TreeRow>
                    ))}
                  </TreeGroup>
                  <RootRow><RootIcon><AppleIcon s={15} /></RootIcon><span>Features - Teach</span></RootRow>
                </TreeBody>
                <DockTabs>
                  <DockTab $active>
                    <Svg s={14} vb="0 0 14 14"><rect x="1" y="2" width="5" height="5" fill="#6aa84f" /><rect x="8" y="4" width="5" height="5" fill="#5a8fc0" /><rect x="8" y="10" width="5" height="3" fill="#d9a441" /></Svg>
                    Feature
                  </DockTab>
                  <DockTab>
                    <Svg s={15} vb="0 0 15 15"><rect x="1.5" y="1" width="12" height="13" fill="#f4f4f4" stroke="#222" /><path d="M4 4H11M4 6.5H11" stroke="#777" /><rect x="4" y="9" width="2" height="3" fill="#2a8" /><rect x="7" y="8" width="2" height="4" fill="#d33" /></Svg>
                    Report
                  </DockTab>
                  <DockTab>
                    <Svg s={15} vb="0 0 15 15"><rect x="2" y="1" width="11" height="13" fill="#d99a3c" stroke="#8a5c18" /><path d="M5 4H10M5 7H10M5 10H10" stroke="#fff1cf" /></Svg>
                    Program
                  </DockTab>
                </DockTabs>
              </DockPanel>
              <DockPanel $h={220}>
                <DockHead>
                  DRO
                  <DockActions>
                    <Pin />
                    <XMark />
                  </DockActions>
                </DockHead>
                <DroBody>
                  <Dro axis="X" val="0.2606" />
                  <Dro axis="Y" val="3.9699" />
                  <Dro axis="Z" val="9.5458" />
                </DroBody>
              </DockPanel>
            </DockColumn>
            <Dialog>
              <DlgTitle>
                Angle Options
                <DlgClose><XMark c="#222" s={12} w={1} /></DlgClose>
              </DlgTitle>
              <DlgBody>
                <DlgFrame>
                  <AngleDraw />
                  <DegreeBtn>Degree</DegreeBtn>
                </DlgFrame>
                <RadioGrid>
                  <RadioItem><RadioDot />120.01910</RadioItem>
                  <RadioItem><RadioDot />300.01910</RadioItem>
                  <RadioItem $nudge={3}><RadioDot $on />59.98090</RadioItem>
                  <RadioItem $top={2}><RadioDot />239.98090</RadioItem>
                </RadioGrid>
                <DlgRule />
                <DlgButtons>
                  <DlgBtn $def>OK</DlgBtn>
                  <DlgBtn>Cancel</DlgBtn>
                </DlgButtons>
              </DlgBody>
            </Dialog>
          </Workspace>
        </RightCol>
      </Below>
    </Win>
  );
}
